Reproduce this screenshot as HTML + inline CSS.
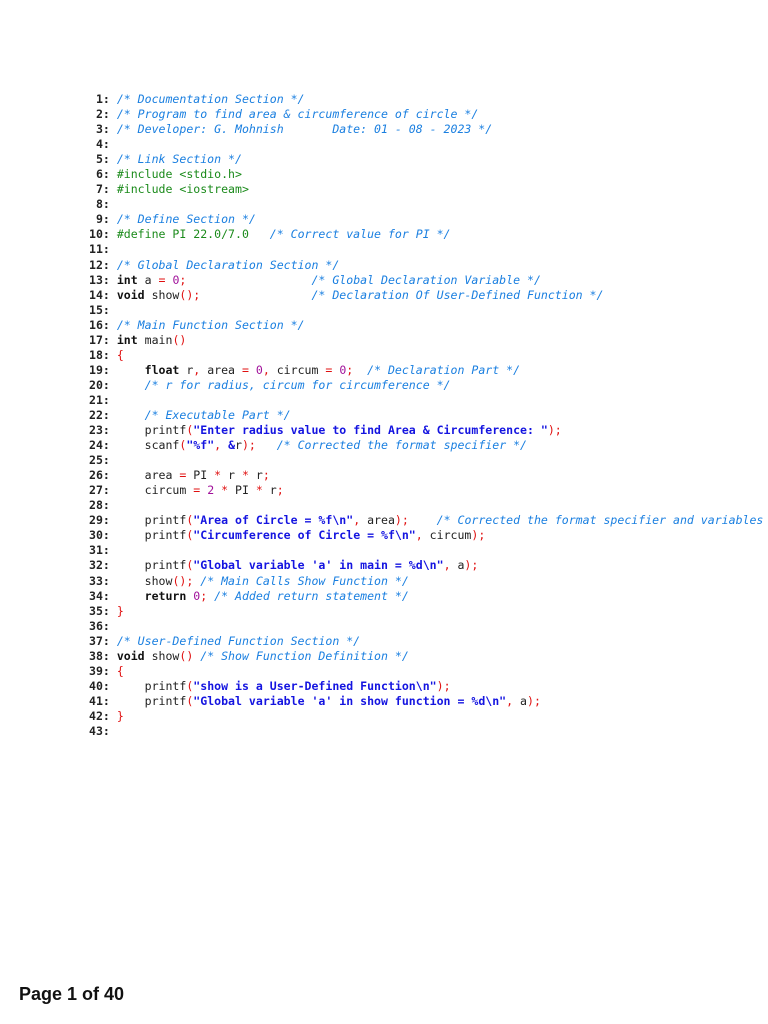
<!DOCTYPE html>
<html><head><meta charset="utf-8"><style>
html,body{margin:0;padding:0;background:#fff;width:768px;height:1024px;overflow:hidden;position:relative}
pre{position:absolute;left:89px;top:92px;margin:0;font-family:"DejaVu Sans Mono","Liberation Mono",monospace;font-size:11.55px;line-height:15.05px;color:#222;white-space:pre}
.n{font-weight:bold;color:#222}
.c{color:#1a7fe0;font-style:italic}
.p{color:#1a8a1a}
.k{font-weight:bold;color:#111}
.o{color:#e01010}
.d{color:#a0109a}
.s{color:#1414e0;font-weight:bold}
.f{position:absolute;left:19px;top:984px;font-family:"Liberation Sans",sans-serif;font-weight:bold;font-size:18px;color:#111}
</style></head><body>
<pre><span class="n"> 1:</span> <span class="c">/* Documentation Section */</span>
<span class="n"> 2:</span> <span class="c">/* Program to find area &amp; circumference of circle */</span>
<span class="n"> 3:</span> <span class="c">/* Developer: G. Mohnish       Date: 01 - 08 - 2023 */</span>
<span class="n"> 4:</span>
<span class="n"> 5:</span> <span class="c">/* Link Section */</span>
<span class="n"> 6:</span> <span class="p">#include &lt;stdio.h&gt;</span>
<span class="n"> 7:</span> <span class="p">#include &lt;iostream&gt;</span>
<span class="n"> 8:</span>
<span class="n"> 9:</span> <span class="c">/* Define Section */</span>
<span class="n">10:</span> <span class="p">#define PI 22.0/7.0</span>   <span class="c">/* Correct value for PI */</span>
<span class="n">11:</span>
<span class="n">12:</span> <span class="c">/* Global Declaration Section */</span>
<span class="n">13:</span> <span class="k">int</span> a <span class="o">=</span> <span class="d">0</span><span class="o">;</span>                  <span class="c">/* Global Declaration Variable */</span>
<span class="n">14:</span> <span class="k">void</span> show<span class="o">();</span>                <span class="c">/* Declaration Of User-Defined Function */</span>
<span class="n">15:</span>
<span class="n">16:</span> <span class="c">/* Main Function Section */</span>
<span class="n">17:</span> <span class="k">int</span> main<span class="o">()</span>
<span class="n">18:</span> <span class="o">{</span>
<span class="n">19:</span>     <span class="k">float</span> r<span class="o">,</span> area <span class="o">=</span> <span class="d">0</span><span class="o">,</span> circum <span class="o">=</span> <span class="d">0</span><span class="o">;</span>  <span class="c">/* Declaration Part */</span>
<span class="n">20:</span>     <span class="c">/* r for radius, circum for circumference */</span>
<span class="n">21:</span>
<span class="n">22:</span>     <span class="c">/* Executable Part */</span>
<span class="n">23:</span>     printf<span class="o">(</span><span class="s">"Enter radius value to find Area &amp; Circumference: "</span><span class="o">);</span>
<span class="n">24:</span>     scanf<span class="o">(</span><span class="s">"%f"</span><span class="o">,</span> <span class="s">&amp;</span>r<span class="o">);</span>   <span class="c">/* Corrected the format specifier */</span>
<span class="n">25:</span>
<span class="n">26:</span>     area <span class="o">=</span> PI <span class="o">*</span> r <span class="o">*</span> r<span class="o">;</span>
<span class="n">27:</span>     circum <span class="o">=</span> <span class="d">2</span> <span class="o">*</span> PI <span class="o">*</span> r<span class="o">;</span>
<span class="n">28:</span>
<span class="n">29:</span>     printf<span class="o">(</span><span class="s">"Area of Circle = %f\n"</span><span class="o">,</span> area<span class="o">);</span>    <span class="c">/* Corrected the format specifier and variables */</span>
<span class="n">30:</span>     printf<span class="o">(</span><span class="s">"Circumference of Circle = %f\n"</span><span class="o">,</span> circum<span class="o">);</span>
<span class="n">31:</span>
<span class="n">32:</span>     printf<span class="o">(</span><span class="s">"Global variable 'a' in main = %d\n"</span><span class="o">,</span> a<span class="o">);</span>
<span class="n">33:</span>     show<span class="o">();</span> <span class="c">/* Main Calls Show Function */</span>
<span class="n">34:</span>     <span class="k">return</span> <span class="d">0</span><span class="o">;</span> <span class="c">/* Added return statement */</span>
<span class="n">35:</span> <span class="o">}</span>
<span class="n">36:</span>
<span class="n">37:</span> <span class="c">/* User-Defined Function Section */</span>
<span class="n">38:</span> <span class="k">void</span> show<span class="o">()</span> <span class="c">/* Show Function Definition */</span>
<span class="n">39:</span> <span class="o">{</span>
<span class="n">40:</span>     printf<span class="o">(</span><span class="s">"show is a User-Defined Function\n"</span><span class="o">);</span>
<span class="n">41:</span>     printf<span class="o">(</span><span class="s">"Global variable 'a' in show function = %d\n"</span><span class="o">,</span> a<span class="o">);</span>
<span class="n">42:</span> <span class="o">}</span>
<span class="n">43:</span>
</pre>
<div class="f">Page 1 of 40</div>
</body></html>
